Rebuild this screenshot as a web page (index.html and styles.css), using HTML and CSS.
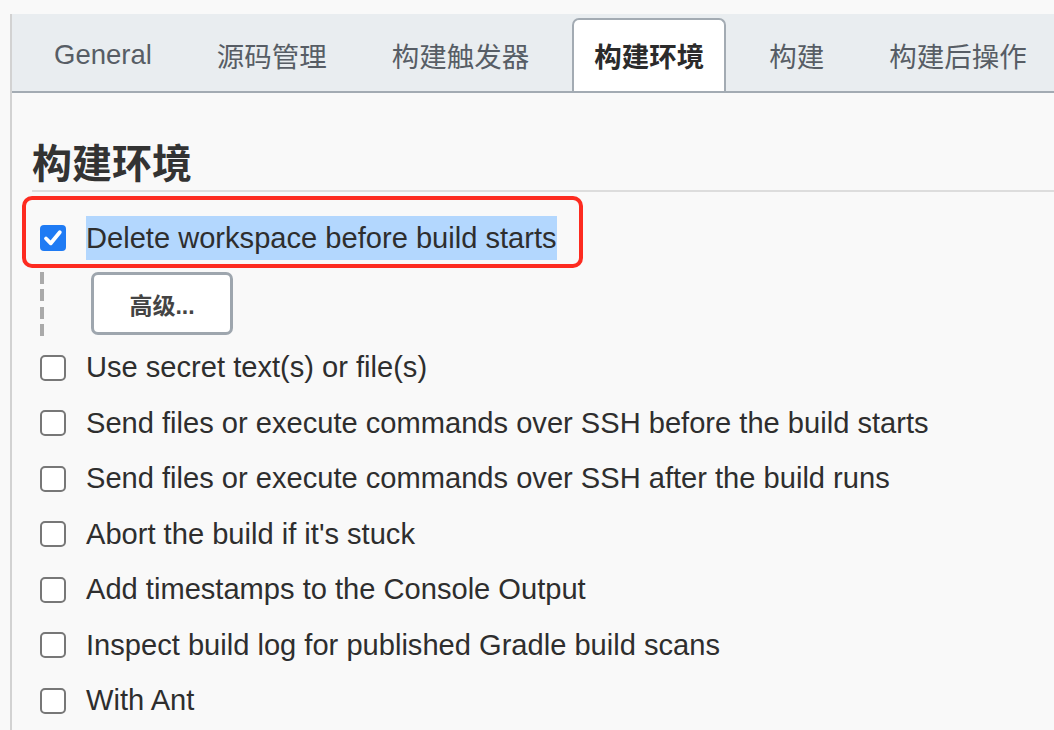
FILE: index.html
```html
<!DOCTYPE html>
<html lang="zh">
<head>
<meta charset="utf-8">
<title>构建环境</title>
<link rel="stylesheet" href="styles.css">
</head>
<body>
<div class="page">
  <div class="panel">
    <nav class="tabbar">
      <div class="tab">General</div>
      <div class="tab">源码管理</div>
      <div class="tab">构建触发器</div>
      <div class="tab active">构建环境</div>
      <div class="tab">构建</div>
      <div class="tab">构建后操作</div>
    </nav>
    <section class="content">
      <h2 class="section-title">构建环境</h2>
      <div class="row row-marked">
        <span class="cb checked">
          <svg viewBox="0 0 26 26" width="26" height="26"><path d="M6 13.5 L10.8 18.3 L19.8 7.2" fill="none" stroke="#fff" stroke-width="3.8" stroke-linecap="round" stroke-linejoin="round"/></svg>
        </span>
        <span class="label selected">Delete workspace before build starts</span>
        <div class="annotation"></div>
      </div>
      <div class="advanced">
        <div class="dash"></div>
        <button class="btn">高级...</button>
      </div>
      <div class="row"><span class="cb"></span><span class="label">Use secret text(s) or file(s)</span></div>
      <div class="row"><span class="cb"></span><span class="label">Send files or execute commands over SSH before the build starts</span></div>
      <div class="row"><span class="cb"></span><span class="label">Send files or execute commands over SSH after the build runs</span></div>
      <div class="row"><span class="cb"></span><span class="label">Abort the build if it's stuck</span></div>
      <div class="row"><span class="cb"></span><span class="label">Add timestamps to the Console Output</span></div>
      <div class="row"><span class="cb"></span><span class="label">Inspect build log for published Gradle build scans</span></div>
      <div class="row"><span class="cb"></span><span class="label">With Ant</span></div>
    </section>
  </div>
</div>
</body>
</html>
```
FILE: styles.css
```css
html, body {
  margin: 0;
  padding: 0;
  background: #f9f9f9;
  height: 100%;
  overflow: hidden;
}
body {
  font-family: "Liberation Sans", "Noto Sans CJK SC", Arial, sans-serif;
  color: #333;
}
.page {
  padding: 14px 0 0 10px;
  height: 100%;
  box-sizing: border-box;
}
.panel {
  border-left: 2px solid #d2d2d2;
  height: 100%;
}
.tabbar {
  display: flex;
  align-items: flex-end;
  gap: 21px;
  padding: 4px 0 0 20px;
  height: 73px;
  background: #e9edf0;
  border-bottom: 2px solid #a3abb3;
  white-space: nowrap;
  overflow: hidden;
}
.tab {
  height: 73px;
  box-sizing: border-box;
  padding: 0 20px 1px;
  display: flex;
  align-items: center;
  font-family: "Liberation Sans", "Noto Sans CJK SC", sans-serif;
  font-size: 27.5px;
  color: #575d65;
  border: 2px solid transparent;
  border-bottom: 0;
  flex-shrink: 0;
}
.tab.active {
  background: #fff;
  border-color: #a3abb3;
  border-radius: 7px 7px 0 0;
  color: #2b2b2b;
  font-weight: bold;
}
.content {
  padding: 0 0 0 20px;
}
.section-title {
  margin: 44px 0 18px;
  padding-bottom: 5px;
  font-family: "Noto Sans CJK SC", sans-serif;
  font-size: 40px;
  line-height: 48px;
  font-weight: bold;
  color: #333;
  border-bottom: 2px solid #dddddd;
}
.row {
  position: relative;
  display: flex;
  align-items: center;
  gap: 20px;
  height: 55.5px;
  padding-left: 8px;
}
.row-marked {
  height: 56px;
}
.cb {
  width: 26px;
  height: 26px;
  box-sizing: border-box;
  border: 2px solid #777;
  border-radius: 5px;
  background: #fff;
  flex-shrink: 0;
  display: flex;
}
.cb.checked {
  border: 0;
  background: #1f7bf4;
  border-radius: 4px;
}
.label {
  font-size: 29.1px;
  color: #2e2e2e;
  white-space: nowrap;
}
.label.selected {
  background: #b3d7fe;
  line-height: 44px;
}
.annotation {
  position: absolute;
  left: -10px;
  top: -14px;
  width: 561px;
  height: 72px;
  box-sizing: border-box;
  border: 4px solid #fd2b20;
  border-radius: 10px;
  pointer-events: none;
}
.advanced {
  display: flex;
  align-items: flex-start;
  height: 74px;
  padding: 6px 0 0 8px;
  box-sizing: border-box;
}
.dash {
  width: 4px;
  height: 64px;
  background: repeating-linear-gradient(to bottom, #aaaaaa 0, #aaaaaa 12px, transparent 12px, transparent 17.3px);
}
.btn {
  margin-left: 47px;
  width: 142px;
  height: 63px;
  background: #fff;
  border: 3px solid #9ea6ae;
  border-radius: 7px;
  font-family: "Liberation Sans", "Noto Sans CJK SC", sans-serif;
  font-size: 23px;
  font-weight: bold;
  color: #444;
  padding: 0;
}
```
